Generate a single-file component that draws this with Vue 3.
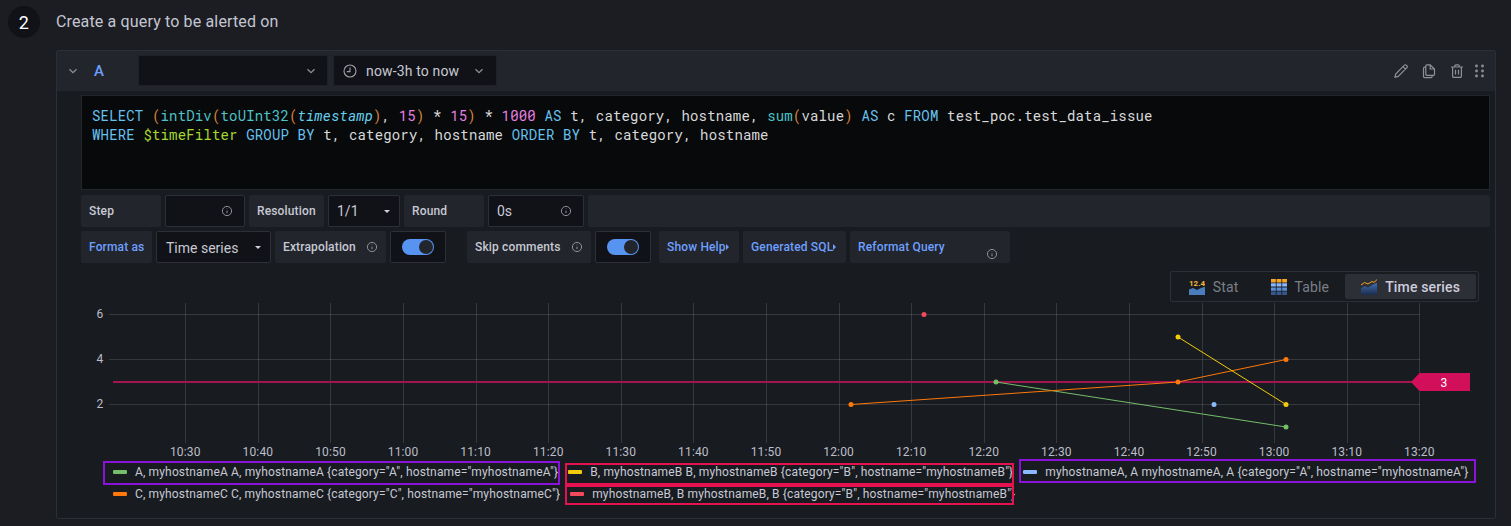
<script setup>
const vLines = Array.from({ length: 18 }, (_, i) => 185.3 + 72.59 * i)
const times = ['10:30','10:40','10:50','11:00','11:10','11:20','11:30','11:40','11:50','12:00','12:10','12:20','12:30','12:40','12:50','13:00','13:10','13:20']
const hLines = [{ y: 314.5, t: '6' }, { y: 359.5, t: '4' }, { y: 404.5, t: '2' }]
const series = [
  { color: '#73bf69', pts: [[996, 382], [1286, 427]] },
  { color: '#ff780a', pts: [[851, 404.5], [1178, 382], [1286, 359.5]] },
  { color: '#f2cc0c', pts: [[1178, 337], [1286, 404.5]] },
  { color: '#f2495c', pts: [[924, 314.5]] },
  { color: '#8ab8ff', pts: [[1214, 404.5]] }
]
const poly = (pts) => pts.map((p) => p.join(',')).join(' ')
const legendRows = [
  [
    { color: '#73bf69', text: 'A, myhostnameA A, myhostnameA {category="A", hostname="myhostnameA"}' },
    { color: '#f2cc0c', text: 'B, myhostnameB B, myhostnameB {category="B", hostname="myhostnameB"}' },
    { color: '#8ab8ff', text: 'myhostnameA, A myhostnameA, A {category="A", hostname="myhostnameA"}' }
  ],
  [
    { color: '#ff780a', text: 'C, myhostnameC C, myhostnameC {category="C", hostname="myhostnameC"}' },
    { color: '#f2495c', text: 'myhostnameB, B myhostnameB, B {category="B", hostname="myhostnameB"}' }
  ]
]
</script>

<template>
  <div class="page">
    <div class="step">
      <div class="num">2</div>
      <div class="title">Create a query to be alerted on</div>
    </div>
    <div class="panel">
      <div class="head">
        <svg class="chev first" viewBox="0 0 10 6"><path d="M1.5 1.2 5 4.6l3.5-3.4" /></svg>
        <span class="ref">A</span>
        <div class="sel ds">
          <svg class="chev" viewBox="0 0 10 6"><path d="M1.5 1.2 5 4.6l3.5-3.4" /></svg>
        </div>
        <div class="sel time">
          <svg class="clock" viewBox="0 0 14 14"><circle cx="7" cy="7" r="6" /><path d="M7 3.5V7.6H3.8" /></svg>
          <span>now-3h to now</span>
          <svg class="chev" viewBox="0 0 10 6"><path d="M1.5 1.2 5 4.6l3.5-3.4" /></svg>
        </div>
        <div class="actions">
          <svg class="act" viewBox="0 0 16 16"><path d="M2 14.2 2.7 11 11.4 2.2a1.3 1.3 0 0 1 1.9 0l.6.6a1.3 1.3 0 0 1 0 1.9L5.2 13.4 2 14.2ZM10 3.7 12.5 6.2" /></svg>
          <svg class="act" viewBox="0 0 16 16"><path d="M6 1.8h3.2L13.5 6v5.2a1.2 1.2 0 0 1-1.2 1.2H6a1.2 1.2 0 0 1-1.2-1.2V3A1.2 1.2 0 0 1 6 1.8ZM9.2 1.8V6h4.3M4.8 4.2H3.7A1.2 1.2 0 0 0 2.5 5.4v8a1.2 1.2 0 0 0 1.2 1.2h6.2a1.2 1.2 0 0 0 1.2-1.2v-1" /></svg>
          <svg class="act" viewBox="0 0 16 16"><path d="M2 4h12M5.8 4V2.8a1 1 0 0 1 1-1h2.4a1 1 0 0 1 1 1V4M3.6 4v9.2a1.2 1.2 0 0 0 1.2 1.2h6.4a1.2 1.2 0 0 0 1.2-1.2V4M6.5 6.8v4.8M9.5 6.8v4.8" /></svg>
          <svg class="dots" viewBox="0 0 9 14"><circle cx="1.5" cy="2" r="1.4" /><circle cx="7.5" cy="2" r="1.4" /><circle cx="1.5" cy="7" r="1.4" /><circle cx="7.5" cy="7" r="1.4" /><circle cx="1.5" cy="12" r="1.4" /><circle cx="7.5" cy="12" r="1.4" /></svg>
        </div>
      </div>

      <div class="query">
        <pre class="code"><span class="k">SELECT</span> <span class="p">(</span><span class="f">intDiv</span><span class="p">(</span><span class="f">toUInt32</span><span class="p">(</span><span class="v">timestamp</span><span class="p">)</span>, <span class="n">15</span><span class="p">)</span> * <span class="n">15</span><span class="p">)</span> * <span class="n">1000</span> <span class="k">AS</span> t, category, hostname, <span class="f">sum</span><span class="p">(</span>value<span class="p">)</span> <span class="k">AS</span> c <span class="k">FROM</span> test_poc.test_data_issue
<span class="k">WHERE</span> <span class="m">$timeFilter</span> <span class="k">GROUP BY</span> t, category, hostname <span class="k">ORDER BY</span> t, category, hostname</pre>

        <div class="row">
          <div class="lab w-step">Step</div>
          <div class="inp w-i1">
            <svg class="info" viewBox="0 0 12 12"><circle cx="6" cy="6" r="4.6" /><path d="M6 5.6v2.6M6 3.6v.5" /></svg>
          </div>
          <div class="lab w-res">Resolution</div>
          <div class="inp w-s1"><span>1/1</span><i class="caret"></i></div>
          <div class="lab w-round">Round</div>
          <div class="inp w-i2"><span>0s</span>
            <svg class="info" viewBox="0 0 12 12"><circle cx="6" cy="6" r="4.6" /><path d="M6 5.6v2.6M6 3.6v.5" /></svg>
          </div>
          <div class="lab grow"></div>
        </div>

        <div class="row">
          <div class="lab blue w-fmt">Format as</div>
          <div class="inp w-s2"><span>Time series</span><i class="caret"></i></div>
          <div class="lab between w-ext">Extrapolation
            <svg class="info" viewBox="0 0 12 12"><circle cx="6" cy="6" r="4.6" /><path d="M6 5.6v2.6M6 3.6v.5" /></svg>
          </div>
          <div class="inp tog"><div class="switch"><i></i></div></div>
          <div class="lab between w-skip">Skip comments
            <svg class="info" viewBox="0 0 12 12"><circle cx="6" cy="6" r="4.6" /><path d="M6 5.6v2.6M6 3.6v.5" /></svg>
          </div>
          <div class="inp tog"><div class="switch"><i></i></div></div>
          <div class="lab blue w-help">Show Help<i class="tri"></i></div>
          <div class="lab blue w-sql">Generated SQL<i class="tri"></i></div>
          <div class="lab blue w-fq">Reformat Query
            <svg class="info low" viewBox="0 0 12 12"><circle cx="6" cy="6" r="4.6" /><path d="M6 5.6v2.6M6 3.6v.5" /></svg>
          </div>
        </div>
      </div>

      <div class="vizbar">
        <div class="radio">
          <div class="opt">
            <svg class="viz" viewBox="0 0 16 16">
              <text x="8" y="6.8" text-anchor="middle" class="stat-t">12.4</text>
              <path d="M0 10.5 4 9l4 2 4-2 4-1.2V16H0Z" fill="#4a7dbd" />
            </svg>
            <span>Stat</span>
          </div>
          <div class="opt">
            <svg class="viz" viewBox="0 0 16 16">
              <path d="M0 0h4.8v3.4H0ZM5.6 0h4.8v3.4H5.6ZM11.2 0H16v3.4h-4.8Z" fill="#f5a623" />
              <path d="M0 4.2h4.8v3.4H0ZM5.6 4.2h4.8v3.4H5.6ZM11.2 4.2H16v3.4h-4.8Z" fill="#8ab8ff" />
              <path d="M0 8.4h4.8v3.4H0ZM5.6 8.4h4.8v3.4H5.6ZM11.2 8.4H16v3.4h-4.8Z" fill="#5a8fd6" />
              <path d="M0 12.6h4.8V16H0ZM5.6 12.6h4.8V16H5.6ZM11.2 12.6H16V16h-4.8Z" fill="#35578a" />
            </svg>
            <span>Table</span>
          </div>
          <div class="opt on">
            <svg class="viz" viewBox="0 0 16 16">
              <defs>
                <linearGradient id="tsg" x1="0" y1="0" x2="0" y2="1">
                  <stop offset="0" stop-color="#3f6fb0" />
                  <stop offset="1" stop-color="#1c2c4a" />
                </linearGradient>
              </defs>
              <path d="M0 9.5 3.5 7 7 8.5 11 6l5-2.2V16H0Z" fill="url(#tsg)" />
              <path d="M0 6 3.5 3.5 7 5l4-2.5L13 3.4 16 .6" fill="none" stroke="#f5a623" stroke-width="1" />
            </svg>
            <span>Time series</span>
          </div>
        </div>
      </div>

      <svg class="chart" viewBox="57 303 1438 158" width="1438" height="158">
        <g class="grid">
          <line v-for="h in hLines" :key="h.t" x1="109" x2="1420" :y1="h.y" :y2="h.y" />
          <line v-for="(x, i) in vLines" :key="i" :x1="Math.round(x) + 0.5" :x2="Math.round(x) + 0.5" y1="303" y2="443" />
        </g>
        <text v-for="h in hLines" :key="'y' + h.t" x="100" :y="h.y + 3.5" text-anchor="middle" class="tick">{{ h.t }}</text>
        <text v-for="(x, i) in vLines" :key="'x' + i" :x="x" y="456" text-anchor="middle" class="tick">{{ times[i] }}</text>
        <line x1="113" x2="1414" y1="382" y2="382" stroke="#a3154e" stroke-width="2" />
        <polygon points="1411,382 1419.5,373 1470,373 1470,391 1419.5,391" fill="#d10f5b" />
        <text x="1444" y="386.5" text-anchor="middle" class="tag">3</text>
        <g v-for="(s, i) in series" :key="'s' + i">
          <polyline v-if="s.pts.length > 1" :points="poly(s.pts)" fill="none" :stroke="s.color" stroke-width="1" />
          <circle v-for="(p, j) in s.pts" :key="j" :cx="p[0]" :cy="p[1]" r="2.5" :fill="s.color" />
        </g>
      </svg>

      <div class="legend">
        <div v-for="(row, r) in legendRows" :key="r" class="lrow">
          <div v-for="(it, i) in row" :key="i" class="litem">
            <i class="sw" :style="{ background: it.color }"></i>
            <span>{{ it.text }}</span>
          </div>
        </div>
        <div class="mark purple m1"></div>
        <div class="mark red m2"></div>
        <div class="mark red m3"></div>
        <div class="mark purple m4"></div>
      </div>
    </div>
  </div>
</template>

<style>
html, body { background: #1b1d22; }
</style>

<style scoped>
.page {
  width: 1511px;
  height: 526px;
  box-sizing: border-box;
  padding: 6px 15px 0 8px;
  background: #1b1d22;
  font-family: Roboto, sans-serif;
  letter-spacing: 0.15px;
  color: #ccccdc;
  overflow: hidden;
}
.step { display: flex; align-items: center; gap: 16px; height: 32px; }
.num {
  width: 32px; height: 32px; border-radius: 50%;
  background: #111217; color: #fff;
  display: flex; align-items: center; justify-content: center;
  font-size: 18px;
}
.title { font-size: 16px; color: #c4c6d2; margin-top: -2px; }
.panel {
  margin: 12px 0 0 48px;
  height: 469px;
  box-sizing: border-box;
  border: 1px solid #2c2f35;
  border-radius: 2px;
  background: #181b20;
}
.head {
  height: 40px;
  display: flex;
  align-items: center;
  background: #22252b;
  position: relative;
}
.chev { width: 10px; height: 6px; fill: none; stroke: #8e9097; stroke-width: 1.3; flex: none; }
.chev.first { margin-left: 11px; }
.ref { margin-left: 16px; width: 44px; font-size: 15px; font-weight: 500; color: #6e9fff; }
.sel {
  height: 31px;
  margin-top: -1px;
  box-sizing: border-box;
  background: #111217;
  border: 1px solid #1f2126;
  border-radius: 2px;
  display: flex;
  align-items: center;
  font-size: 14px;
  color: #c7c9d4;
}
.ds { width: 190px; justify-content: flex-end; padding-right: 11px; margin-right: 5px; }
.time { width: 164px; padding: 0 12px 0 9px; justify-content: space-between; }
.clock { width: 14px; height: 14px; fill: none; stroke: #9fa1a8; stroke-width: 1.1; flex: none; }
.time span { margin-left: 9px; flex: 1; }
.actions { margin-left: auto; display: flex; align-items: center; gap: 12px; padding-right: 11px; }
.act { width: 16px; height: 16px; fill: none; stroke: #8e9097; stroke-width: 1.2; }
.dots { width: 9px; height: 14px; fill: #8e9097; margin-left: -2px; }
.query { padding: 4px 5px 0 24px; display: flex; flex-direction: column; }
.code {
  margin: 0 0 5px;
  height: 95px;
  box-sizing: border-box;
  padding: 10px 10px 0;
  background: #08090b;
  border: 1px solid #22252b;
  font-family: "Roboto Mono", "DejaVu Sans Mono", monospace;
  font-size: 14px;
  letter-spacing: 0.163px;
  line-height: 19px;
  color: #d8d9da;
}
.k { color: #66c2ef; }
.f { color: #4ec4c9; }
.p { color: #d9843a; }
.n { color: #e77fe0; }
.v { color: #66d0ef; font-style: italic; }
.m { color: #a6d82e; }
.row { display: flex; gap: 4px; height: 32px; margin-bottom: 4px; }
.lab {
  box-sizing: border-box;
  background: #22252b;
  border-radius: 2px;
  font-size: 12px;
  font-weight: 500;
  color: #c7c9d4;
  display: flex;
  align-items: center;
  padding: 0 8px;
  flex: none;
  white-space: nowrap;
}
.lab.blue { color: #6e9fff; }
.between { justify-content: space-between; }
.grow { flex: 1; }
.inp {
  box-sizing: border-box;
  background: #111217;
  border: 1px solid #2c2f35;
  border-radius: 2px;
  font-size: 14px;
  letter-spacing: 0;
  color: #c7c9d4;
  display: flex;
  align-items: center;
  justify-content: space-between;
  padding: 0 9px;
  flex: none;
}
.w-step { width: 80px; }
.w-i1 { width: 80px; justify-content: flex-end; padding-right: 11px; }
.w-res { width: 75px; }
.w-s1 { width: 72px; padding-left: 8px; }
.w-round { width: 80px; }
.w-i2 { width: 96px; padding: 0 11px 0 8px; }
.w-fmt { width: 71px; }
.w-s2 { width: 115px; }
.w-s2 span { padding-top: 1px; }
.w-ext { width: 111px; }
.tog { width: 56px; justify-content: center; padding: 0; }
.w-skip { width: 124px; margin-left: 17px; }
.w-help { width: 80px; margin-left: 4px; }
.w-sql { width: 103px; }
.w-fq { width: 160px; justify-content: space-between; }
.info { width: 12px; height: 12px; fill: none; stroke: #8e9097; stroke-width: 1; flex: none; }
.info.low { margin-top: 13px; margin-right: 4px; }
.caret {
  width: 0; height: 0;
  border-left: 3.5px solid transparent;
  border-right: 3.5px solid transparent;
  border-top: 3.5px solid #d0d2da;
}
.tri {
  width: 0; height: 0;
  border-top: 3.5px solid transparent;
  border-bottom: 3.5px solid transparent;
  border-left: 3.5px solid #6e9fff;
}
.switch {
  width: 32px; height: 16px; border-radius: 8px;
  background: #5794f2;
  position: relative;
}
.switch i {
  position: absolute; right: 1px; top: 1px;
  width: 14px; height: 14px; border-radius: 50%;
  background: #22252b;
}
.vizbar { display: flex; justify-content: flex-end; padding: 4px 16px 0 0; }
.radio {
  display: flex;
  height: 31px;
  box-sizing: border-box;
  border: 1px solid #2c2f35;
  border-radius: 2px;
  padding: 2px;
}
.opt {
  display: flex; align-items: center; gap: 8px;
  padding: 0 16px;
  font-size: 14px;
  color: #7b7f88;
  border-radius: 2px;
}
.opt.on { background: #2c2f36; color: #ccccdc; font-weight: 500; }
.viz { width: 16px; height: 16px; flex: none; }
.stat-t { font-size: 8px; font-weight: 700; letter-spacing: 0; fill: #f5b73d; font-family: Roboto, sans-serif; }
.chart { display: block; margin-top: 1px; }
.grid line { stroke: rgba(255, 255, 255, 0.13); stroke-width: 1; shape-rendering: crispEdges; }
.tick { font-size: 12px; fill: #bcbec9; font-family: Roboto, sans-serif; }
.tag { font-size: 12px; fill: #fff; font-family: Roboto, sans-serif; }
.legend {
  position: relative;
  height: 44px;
  display: flex;
  flex-direction: column;
  padding-left: 56px;
  box-sizing: border-box;
}
.lrow { display: flex; gap: 10px; height: 22px; align-items: center; }
.litem { display: flex; align-items: center; gap: 8px; font-size: 12px; color: #c7c9d4; white-space: nowrap; }
.sw { width: 14px; height: 4px; border-radius: 1px; flex: none; }
.mark { position: absolute; box-sizing: border-box; border: 2.5px solid; pointer-events: none; }
.purple { border-color: #8a12d9; }
.red { border-color: #e6114f; }
.m1 { left: 46px; top: 0; width: 457px; height: 24px; }
.m2 { left: 508px; top: 2px; width: 449px; height: 22px; }
.m3 { left: 508px; top: 24px; width: 449px; height: 20px; }
.m4 { left: 962px; top: -2px; width: 457px; height: 24px; }
</style>
